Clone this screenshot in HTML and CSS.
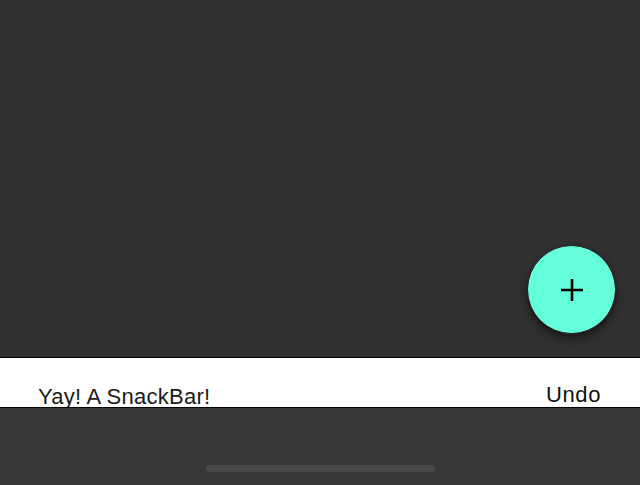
FILE: index.html
```html
<!DOCTYPE html>
<html>
<head>
<meta charset="utf-8">
<link rel="stylesheet" href="styles.css">
</head>
<body>
<div class="screen">
  <div class="content">
    <button class="fab" aria-label="Add">
      <svg width="24" height="24" viewBox="0 0 24 24"><path d="M12 1v22M1 12h22" stroke="#000" stroke-width="2.6" fill="none"/></svg>
    </button>
  </div>
  <div class="snackbar">
    <span class="msg">Yay! A SnackBar!</span>
    <span class="action">Undo</span>
  </div>
  <div class="bottom">
    <div class="home-indicator"></div>
  </div>
</div>
</body>
</html>
```
FILE: styles.css
```css
html, body {
  margin: 0;
  padding: 0;
  background: #303030;
}
.screen {
  width: 640px;
  height: 485px;
  display: flex;
  flex-direction: column;
  font-family: "Liberation Sans", Arial, sans-serif;
}
.content {
  height: 357px;
  position: relative;
  background: #303030;
}
.fab {
  position: absolute;
  left: 527px;
  top: 245px;
  width: 89px;
  height: 89px;
  border-radius: 50%;
  background: #64ffda;
  border: 1px solid #2a1a1a;
  box-sizing: border-box;
  padding: 0;
  display: flex;
  align-items: center;
  justify-content: center;
  box-shadow: 0 6px 10px rgba(0,0,0,0.35), 0 2px 4px rgba(0,0,0,0.25);
}
.snackbar {
  height: 49px;
  background: #fff;
  border-top: 1px solid #000;
  border-bottom: 1px solid #000;
  display: flex;
  justify-content: space-between;
  align-items: flex-end;
  padding: 0 39px 0 38px;
  overflow: hidden;
  color: #1a1a1a;
  font-size: 22px;
}
.msg {
  line-height: 1;
  margin-bottom: -1px;
  font-weight: 400;
  letter-spacing: 0.25px;
}
.action {
  line-height: 1;
  margin-bottom: 1px;
  letter-spacing: 0.6px;
  color: #111;
}
.bottom {
  flex: 1;
  background: #373737;
  display: flex;
  justify-content: center;
  align-items: flex-end;
}
.home-indicator {
  width: 229px;
  height: 7px;
  border-radius: 4px;
  background: #4a4a4a;
  margin-bottom: 13px;
}
```
